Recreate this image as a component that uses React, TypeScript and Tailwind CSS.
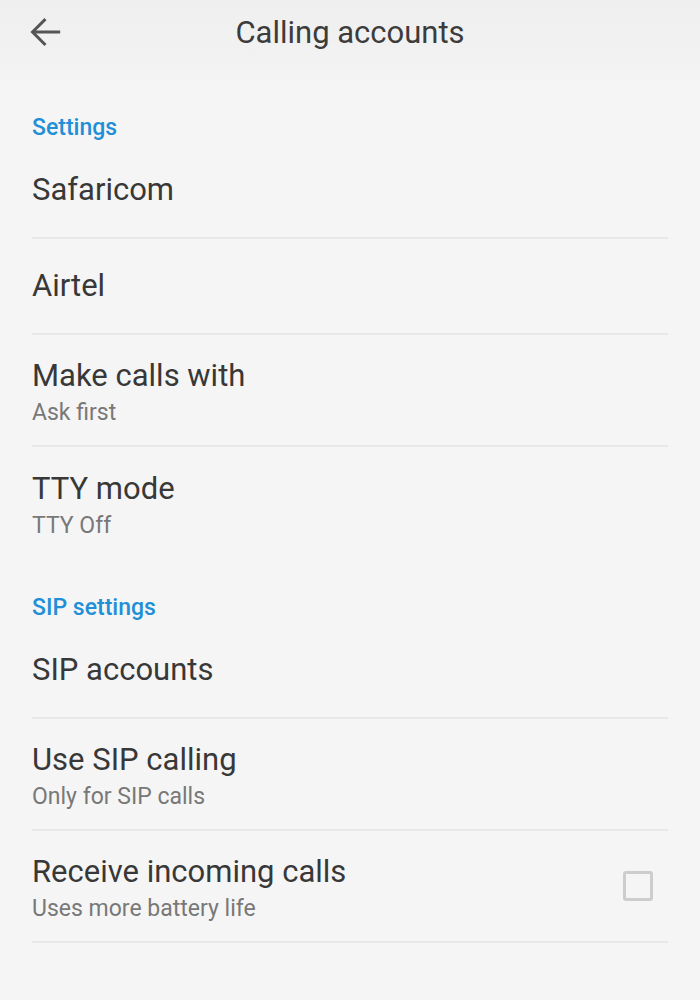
import React from "react";

type Item = { title: string; subtitle?: string; checkbox?: boolean; divider?: boolean };

const settings: Item[] = [
  { title: "Safaricom", divider: true },
  { title: "Airtel", divider: true },
  { title: "Make calls with", subtitle: "Ask first", divider: true },
  { title: "TTY mode", subtitle: "TTY Off" },
];

const sip: Item[] = [
  { title: "SIP accounts", divider: true },
  { title: "Use SIP calling", subtitle: "Only for SIP calls", divider: true },
  { title: "Receive incoming calls", subtitle: "Uses more battery life", checkbox: true, divider: true },
];

export default function App() {
  return (
    <div className="min-h-[1000px] w-[700px] bg-[#f5f5f5] font-['Roboto',sans-serif]">
      <header className="relative flex h-[80px] items-center justify-center bg-gradient-to-b from-[#efefef] to-[#f3f3f3] pb-[14px]">
        <button type="button" className="absolute left-[27px] top-[13px] text-[#555555]" aria-label="Back">
          <svg width="38" height="38" viewBox="0 0 24 24" fill="none" stroke="currentColor" strokeWidth="1.9" strokeLinecap="square">
            <path d="M20 12H4.5" />
            <path d="M11 4.5L3.5 12l7.5 7.5" />
          </svg>
        </button>
        <h1 className="text-[31px] leading-[38px] text-[#3c3c3c]">Calling accounts</h1>
      </header>

      <SectionLabel label="Settings" className="pt-[33px]" />
      {settings.map((item) => (
        <Row key={item.title} {...item} />
      ))}

      <SectionLabel label="SIP settings" className="pt-[34px]" />
      {sip.map((item) => (
        <Row key={item.title} {...item} />
      ))}
    </div>
  );
}

function SectionLabel({ label, className }: { label: string; className: string }) {
  return (
    <p className={`px-[32px] text-[23px] font-medium leading-[30px] text-[#1f8fd7] ${className}`}>{label}</p>
  );
}

function Row({ title, subtitle, checkbox, divider }: Item) {
  return (
    <div className="px-[32px]">
      <div
        className={`flex items-center justify-between ${subtitle ? "h-[112px]" : "h-[96px]"} ${
          divider ? "border-b-2 border-[#e8e8e8]" : ""
        }`}
      >
        <div className={subtitle ? "pt-[5px]" : ""}>
          <p className="text-[31px] leading-[38px] text-[#383838]">{title}</p>
          {subtitle ? <p className="mt-[3px] text-[23px] leading-[30px] text-[#787878]">{subtitle}</p> : null}
        </div>
        {checkbox ? (
          <span className="mr-[15px] h-[30px] w-[30px] rounded-[3px] border-[3px] border-[#cdcdcd]" />
        ) : null}
      </div>
    </div>
  );
}
